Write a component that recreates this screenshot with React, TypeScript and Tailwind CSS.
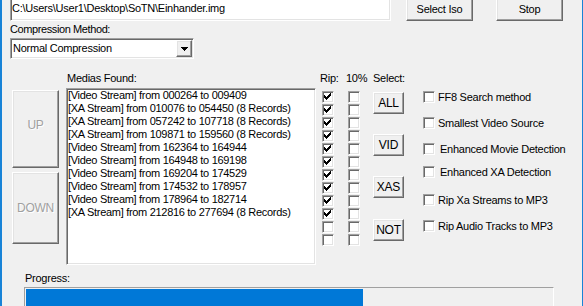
import React from "react";

const raised =
  "bg-[#f0f0f0] border border-t-white border-l-white border-r-[#696969] border-b-[#696969] shadow-[inset_-1px_-1px_0_#a0a0a0,inset_1px_1px_0_#e3e3e3]";
const sunken =
  "bg-white border border-t-[#a0a0a0] border-l-[#a0a0a0] border-r-white border-b-white shadow-[inset_1px_1px_0_#696969,inset_-1px_-1px_0_#e3e3e3]";

function Check() {
  const px: [number, number][] = [
    [6, 0],
    [5, 1], [6, 1],
    [0, 2], [4, 2], [5, 2], [6, 2],
    [0, 3], [1, 3], [3, 3], [4, 3], [5, 3],
    [0, 4], [1, 4], [2, 4], [3, 4], [4, 4],
    [1, 5], [2, 5], [3, 5],
    [2, 6],
  ];
  return (
    <svg width="7" height="7" viewBox="0 0 7 7" className="block ml-[1px] mt-[1px]" shapeRendering="crispEdges">
      {px.map(([x, y], i) => (
        <rect key={i} x={x} y={y} width="1" height="1" fill="#000" />
      ))}
    </svg>
  );
}

function Box({ checked = false }: { checked?: boolean }) {
  return (
    <div className={"w-[12px] h-[12px] shrink-0 " + sunken}>
      {checked ? <Check /> : null}
    </div>
  );
}

function Btn({ label, className = "" }: { label: string; className?: string }) {
  return (
    <div className={"flex items-center justify-center " + raised + " " + className}>
      <span>{label}</span>
    </div>
  );
}

const items = [
  "[Video Stream] from 000264 to 009409",
  "[XA Stream] from 010076 to 054450 (8 Records)",
  "[XA Stream] from 057242 to 107718 (8 Records)",
  "[XA Stream] from 109871 to 159560 (8 Records)",
  "[Video Stream] from 162364 to 164944",
  "[Video Stream] from 164948 to 169198",
  "[Video Stream] from 169204 to 174529",
  "[Video Stream] from 174532 to 178957",
  "[Video Stream] from 178964 to 182714",
  "[XA Stream] from 212816 to 277694 (8 Records)",
];

const options: { label: string; mt: string; pl: string }[] = [
  { label: "FF8 Search method", mt: "mt-[19px]", pl: "pl-[3px]" },
  { label: "Smallest Video Source", mt: "mt-[14px]", pl: "pl-[3px]" },
  { label: "Enhanced Movie Detection", mt: "mt-[14px]", pl: "pl-[5px]" },
  { label: "Enhanced XA Detection", mt: "mt-[11px]", pl: "pl-[5px]" },
  { label: "Rip Xa Streams to MP3", mt: "mt-[16px]", pl: "pl-[3px]" },
  { label: "Rip Audio Tracks to MP3", mt: "mt-[14px]", pl: "pl-[3px]" },
];

export default function App() {
  return (
    <div className="w-[583px] h-[306px] overflow-hidden bg-[#f0f0f0] border-l-2 border-r border-[#1883d7] flex flex-col text-[11px] leading-[13px] text-black tracking-[-0.25px] [font-family:'Liberation_Sans',Arial,sans-serif]">
      {/* top row */}
      <div className="flex items-end -mt-[3px] pl-[8px] h-[24px] shrink-0">
        <div className={"w-[381px] h-[24px] flex items-center pb-[2px] pl-[1px] whitespace-nowrap " + sunken}>
          C:\Users\User1\Desktop\SoTN\Einhander.img
        </div>
        <Btn label="Select Iso" className="ml-[15px] w-[67px] h-[24px]" />
        <Btn label="Stop" className="ml-[23px] w-[67px] h-[24px]" />
      </div>

      <div className="mt-[2px] pl-[8px] h-[13px] shrink-0 tracking-[-0.4px]">Compression Method:</div>

      <div className={"mt-[2px] ml-[8px] w-[184px] h-[21px] shrink-0 flex items-center justify-between pl-[2px] pr-[1px] " + sunken}>
        <span>Normal Compression</span>
        <div className={"w-[16px] h-[17px] flex items-center justify-center " + raised}>
          <svg width="7" height="4" viewBox="0 0 7 4" shapeRendering="crispEdges">
            <rect x="0" y="0" width="7" height="1" fill="#000" />
            <rect x="1" y="1" width="5" height="1" fill="#000" />
            <rect x="2" y="2" width="3" height="1" fill="#000" />
            <rect x="3" y="3" width="1" height="1" fill="#000" />
          </svg>
        </div>
      </div>

      {/* middle */}
      <div className="mt-[13px] flex items-start pl-[10px] shrink-0">
        <div className="w-[47px] mt-[18px] flex flex-col text-[12px] text-[#a0a0a0] [text-shadow:1px_1px_0_#fff]">
          <Btn label="UP" className="h-[78px] pb-[8px]" />
          <Btn label="DOWN" className="h-[72px] mt-[4px]" />
        </div>

        <div className="ml-[7px] w-[250px] flex flex-col">
          <div className="pl-[1px] h-[13px]">Medias Found:</div>
          <div className={"mt-[3px] h-[177px] pl-[1px] whitespace-nowrap overflow-hidden tracking-[-0.3px] " + sunken}>
            {items.map((t, i) => (
              <div key={i} className="h-[13px] leading-[13px]">
                {t}
              </div>
            ))}
          </div>
        </div>

        <div className="ml-[4px] w-[26px] flex flex-col">
          <div className="h-[13px]">Rip:</div>
          <div className="mt-[6px] pl-[2px] flex flex-col gap-[1px]">
            {Array.from({ length: 12 }).map((_, i) => (
              <Box key={i} checked={i < 10} />
            ))}
          </div>
        </div>

        <div className="w-[27px] flex flex-col">
          <div className="h-[13px]">10%</div>
          <div className="mt-[6px] pl-[2px] flex flex-col gap-[1px]">
            {Array.from({ length: 12 }).map((_, i) => (
              <Box key={i} />
            ))}
          </div>
        </div>

        <div className="w-[31px] flex flex-col whitespace-nowrap">
          <div className="h-[13px]">Select:</div>
          <Btn label="ALL" className="mt-[7px] h-[22px] text-[12px]" />
          <Btn label="VID" className="mt-[20px] h-[22px] text-[12px]" />
          <Btn label="XAS" className="mt-[20px] h-[22px] text-[12px]" />
          <Btn label="NOT" className="mt-[21px] h-[22px] text-[12px]" />
        </div>

        <div className="ml-[19px] flex flex-col whitespace-nowrap">
          {options.map((o) => (
            <div key={o.label} className={"flex items-center h-[12px] " + o.mt}>
              <Box />
              <span className={o.pl}>{o.label}</span>
            </div>
          ))}
        </div>
      </div>

      {/* progress */}
      <div className="mt-[7px] pl-[23px] h-[13px] shrink-0">Progress:</div>
      <div className="mt-[2px] ml-[22px] w-[530px] h-[30px] shrink-0 border border-t-[#a0a0a0] border-l-[#a0a0a0] border-r-white border-b-white p-[1px] flex">
        <div className="w-[337px] h-full bg-[#0078d7]" />
      </div>
    </div>
  );
}
